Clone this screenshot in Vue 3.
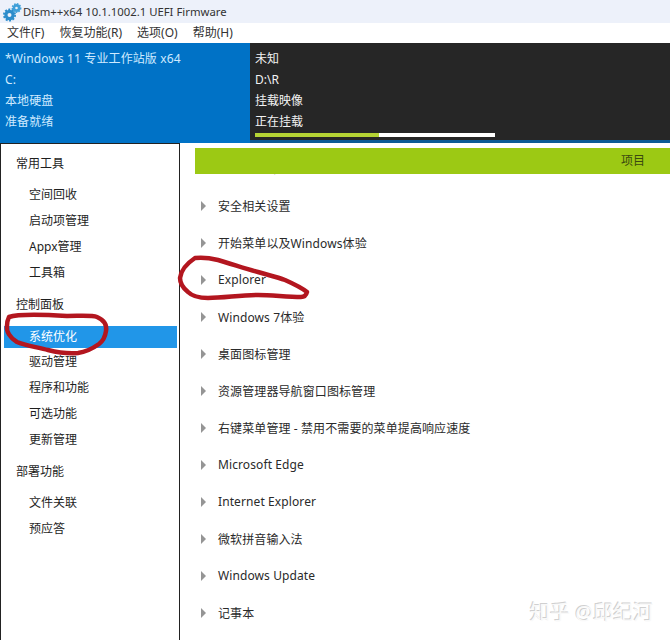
<script setup>
const tools1 = ['空间回收', '启动项管理', 'Appx管理', '工具箱']
const tools2 = ['系统优化', '驱动管理', '程序和功能', '可选功能', '更新管理']
const tools3 = ['文件关联', '预应答']
const rows = ['安全相关设置', '开始菜单以及Windows体验', 'Explorer', 'Windows 7体验', '桌面图标管理', '资源管理器导航窗口图标管理', '右键菜单管理 - 禁用不需要的菜单提高响应速度', 'Microsoft Edge', 'Internet Explorer', '微软拼音输入法', 'Windows Update', '记事本']
</script>

<template>
  <div class="app">
    <div class="title">
      <svg class="logo" width="20" height="20" viewBox="0 0 20 20" fill="none">
        <circle cx="7.5" cy="13" r="3.6" stroke="#2b8ccb" stroke-width="3.2" />
        <circle cx="7.5" cy="13" r="5.6" stroke="#2b8ccb" stroke-width="1.8" stroke-dasharray="2 1.5" />
        <circle cx="14.5" cy="6" r="2.6" stroke="#3f9fd8" stroke-width="2.6" />
        <circle cx="14.5" cy="6" r="4.2" stroke="#3f9fd8" stroke-width="1.5" stroke-dasharray="1.6 1.2" />
      </svg>
      <span>Dism++x64 10.1.1002.1 UEFI Firmware</span>
    </div>
    <div class="menu">
      <span>文件(F)</span><span>恢复功能(R)</span><span>选项(O)</span><span>帮助(H)</span>
    </div>
    <div class="head">
      <div class="blue">
        <div>*Windows 11 专业工作站版 x64</div>
        <div>C:</div>
        <div>本地硬盘</div>
        <div>准备就绪</div>
      </div>
      <div class="dark">
        <div>未知</div>
        <div>D:\R</div>
        <div>挂载映像</div>
        <div>正在挂载</div>
        <div class="progress"><div class="fill"></div></div>
      </div>
    </div>
    <div class="body">
      <aside class="side">
        <div class="group">常用工具</div>
        <div v-for="t in tools1" :key="t" class="item">{{ t }}</div>
        <div class="group next">控制面板</div>
        <div v-for="(t, i) in tools2" :key="t" class="item" :class="{ active: i === 0 }">{{ t }}</div>
        <div class="group next">部署功能</div>
        <div v-for="t in tools3" :key="t" class="item">{{ t }}</div>
      </aside>
      <main class="main">
        <div class="bar"><span>项目</span></div>
        <div class="list">
          <div class="clipped">任务栏的设置</div>
          <div v-for="r in rows" :key="r" class="row">
            <i class="tri"></i><span>{{ r }}</span>
          </div>
        </div>
      </main>
    </div>
    <div class="mark">知乎 @邱纪河</div>
    <svg class="ink" width="670" height="640" viewBox="0 0 670 640" fill="none" stroke="#b3161f" stroke-width="4.5" stroke-linecap="round" stroke-linejoin="round">
      <path d="M9 317 C18 314 50 315 67 316 C80 316 92 315 97 317 C104 320 107 325 106 331 C105 338 103 341 99 344 C92 349 86 352 78 353 C66 354 56 352 48 350 C36 347 24 345 17 342 C10 338 6 331 7 326 C7 322 8 319 9 317Z" />
      <path d="M195 258 C203 257 210 258 218 260 C232 264 246 269 258 272 C268 275 277 277 285 280 C294 284 302 288 307 292 C306 296 304 297 301 297 C287 297 272 295 258 295 C240 295 224 298 208 298 C199 298 192 296 188 292 C183 288 180 283 180 278 C181 270 186 264 195 258Z" />
    </svg>
  </div>
</template>

<style>
html, body { margin: 0; background: #fff; }
</style>

<style scoped>
.app {
  position: relative;
  width: 670px;
  height: 640px;
  overflow: hidden;
  background: #fff;
  font-family: "Noto Sans", "Noto Sans CJK SC", sans-serif;
  font-size: 12px;
  color: #1e1e1e;
}
.title {
  height: 23px;
  display: flex;
  align-items: center;
  gap: 1px;
  padding-left: 2px;
  background: #edf1fa;
  color: #333;
  font-size: 11.35px;
}
.menu {
  height: 18px;
  display: flex;
  align-items: center;
  gap: 15px;
  padding-left: 7px;
  margin-bottom: 2px;
  color: #333;
}
.head {
  display: flex;
  height: 100px;
  background: #0d5b96;
}
.blue, .dark {
  padding-top: 5px;
  height: 97px;
  box-sizing: border-box;
  line-height: 21px;
}
.blue {
  width: 250px;
  padding-left: 5px;
  background: #0072c6;
  color: #cfeaff;
  height: 100px;
  letter-spacing: 0.12px;
}
.dark {
  flex: 1;
  padding-left: 5px;
  background: #262626;
  color: #f2f2f2;
}
.progress {
  width: 240px;
  height: 4px;
  margin-top: 1px;
  background: #fff;
}
.fill {
  width: 124px;
  height: 4px;
  background: #b5d334;
}
.body {
  display: flex;
  height: 497px;
}
.side {
  width: 180px;
  box-sizing: border-box;
  border: 1px solid #222;
  border-bottom: 0;
  padding: 9px 2px 0 3px;
  background: #fff;
}
.group {
  height: 26px;
  line-height: 22px;
  padding-left: 12px;
  margin-bottom: 3px;
}
.group.next { margin-top: 8px; }
.item {
  height: 26px;
  line-height: 26px;
  padding-left: 25px;
}
.item.active {
  background: #2196e8;
  color: #fff;
  height: 22px;
  line-height: 22px;
  margin-top: 6px;
  margin-bottom: 1px;
}
.main {
  flex: 1;
  min-width: 0;
  padding: 5px 0 0 15px;
}
.bar {
  height: 26px;
  line-height: 25px;
  background: #9cc914;
  text-align: right;
  padding-right: 25px;
  color: #3b4a10;
}
.list {
  height: 466px;
  overflow: hidden;
  position: relative;
  padding-top: 13px;
  box-sizing: border-box;
}
.clipped {
  position: absolute;
  top: -15px;
  left: 77px;
  line-height: 20px;
}
.row {
  height: 37px;
  display: flex;
  align-items: center;
  gap: 12px;
  padding-left: 6px;
  color: #2a2a2a;
  letter-spacing: 0.1px;
}
.tri {
  width: 0;
  height: 0;
  border-left: 5px solid #959595;
  border-top: 5px solid transparent;
  border-bottom: 5px solid transparent;
}
.mark {
  position: absolute;
  left: 530px;
  top: 598px;
  font-size: 20px;
  line-height: 30px;
  color: #f9f9f9;
  text-shadow: -1px -1px 0 #d0d0d0;
}
.ink {
  position: absolute;
  left: 0;
  top: 0;
  pointer-events: none;
}
</style>
